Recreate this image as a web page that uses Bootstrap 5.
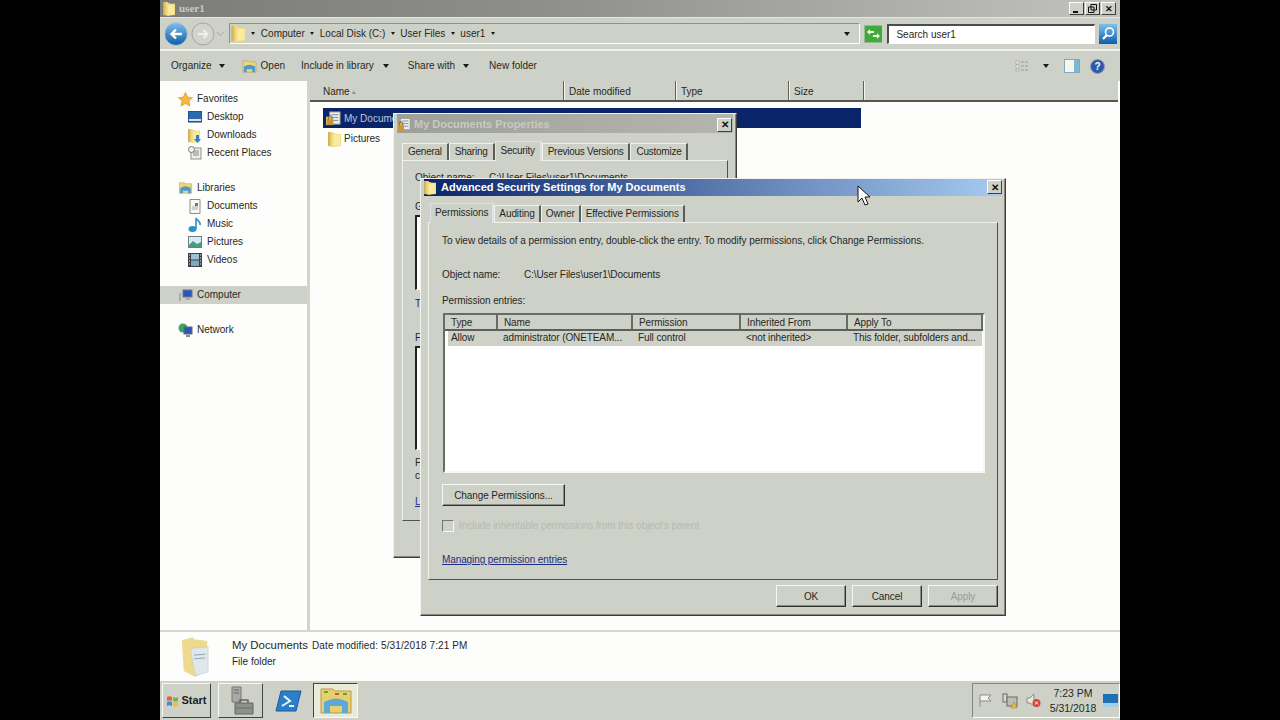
<!DOCTYPE html>
<html lang="en">
<head>
<meta charset="UTF-8">
<title>user1</title>
<link href="https://cdn.jsdelivr.net/npm/bootstrap@5.3.0/dist/css/bootstrap.min.css" rel="stylesheet">
<style>
  :root { --panel: #ced1c7; --dark: #4a4c48; }
  html, body { height: 100%; background: #000; overflow: hidden; }
  body { font-family: "Liberation Sans", Arial, sans-serif; font-size: 10px; color: #26281f; line-height: 1.2; }
  .screen { position: relative; width: 960px; height: 720px; margin: 0 auto; background: #fdfefb; overflow: hidden; }

  /* explorer chrome */
  .titlebar { height: 18px; padding-left: 3px; background: linear-gradient(90deg, #7c7d7a, #8e8f8c 40%, #c2c3be); color: #c9cac5; font-weight: 700; font-size: 11px; border-bottom: 1px solid #e6e7e2; }
  .title-name { font-family: "Liberation Serif", serif; }
  .win-btn { width: 15px; height: 13px; background: var(--panel); border: 1px solid; border-color: #fff #3f3f3f #3f3f3f #fff; font-size: 9px; font-weight: 700; line-height: 10px; text-align: center; color: #111; padding: 0; display: flex; align-items: center; justify-content: center; }
  .addressbar { height: 33px; padding: 0 3px 0 5px; background: var(--panel); border-bottom: 2px solid #f0f1ec; }
  .crumbs { width: 632px; height: 21px; margin-left: 2px; padding-right: 5px; border: 1px solid #8f918b; border-bottom-color: #fff; border-right-color: #fff; }
  .crumbs span { white-space: nowrap; }
  .caret-d { display: inline-block; width: 0; height: 0; border-left: 3.5px solid transparent; border-right: 3.5px solid transparent; border-top: 4px solid #1b1b1b; flex-shrink: 0; }
  .caret-s { border-left-width: 2.5px; border-right-width: 2.5px; border-top-width: 3px; margin: 0 5.5px; }
  .search { width: 208px; height: 20px; margin-left: 5px; padding: 0 0 0 7px; font-size: 10px; background: #fff; border: 1px solid #fff; border-top: 2px solid #4b4d48; border-left: 2px solid #4b4d48; color: #26281f; }
  .toolbar { height: 30px; padding: 0 15px 0 11px; background: var(--panel); }
  .main { height: 549px; }
  .sidenav { width: 150px; padding-top: 9px; border-right: 3px solid #d2d4cc; flex-shrink: 0; }
  .sidenav .list-group-item { height: 18px; padding: 0 0 0 18px; border: 0; background: transparent; color: #26281f; font-size: 10px; display: flex; align-items: center; gap: 4px; border-radius: 0; }
  .sidenav .list-group-item.sub { padding-left: 28px; gap: 5px; }
  .sidenav .list-group-item.active { background: var(--panel); }
  .sidenav .list-group-item.group-gap { margin-top: 17px; }
  .files { flex: 1 1 auto; min-width: 0; }
  .colhead { height: 21px; background: var(--panel); border-bottom: 2px solid #55574f; margin-right: 2px; }
  .colhead > div { height: 100%; padding-left: 5px; line-height: 22px; border-right: 1px solid #5f615a; box-shadow: 1px 0 #f3f4ee; }
  .sort-mark { color: #8f918a; font-size: 7px; vertical-align: 1px; }
  .filelist { padding: 6px 0 0 13px; }
  .filerow { height: 20px; width: 538px; padding-left: 3px; gap: 3px; }
  .filerow.sel { background: #0a246a; color: #bfc7d8; margin-bottom: 1px; padding-top: 1px; }
  .details { height: 51px; border-top: 2px solid #d6d8d0; padding-left: 20px; }
  .details .name { font-size: 11.4px; margin-right: 4px; }
  .details .modified { letter-spacing: .12px; }
  .details .info { margin-left: 22px; padding-bottom: 6px; }
  .taskbar { height: 39px; padding: 2px 0 2px 2px; background: var(--panel); }
  .task-btn { height: 35px; padding: 0; border: 1px solid; border-color: #f7f8f3 #43453f #43453f #f7f8f3; border-radius: 0; background: var(--panel); display: flex; align-items: center; justify-content: center; }
  .task-btn.down { border-color: #43453f #f7f8f3 #f7f8f3 #43453f; background: #e9ead7; }
  .tray { width: 148px; height: 35px; border: 1px solid; border-color: #84867f #fbfbf8 #fbfbf8 #84867f; padding-left: 5px; }
  .tray .clock { font-size: 10.5px; text-align: center; line-height: 15px; width: 52px; margin-left: 6px; }

  /* dialogs */
  .dialog { position: absolute; background: var(--panel); border: 1px solid; border-color: #f1f2ed #3d3f3a #3d3f3a #f1f2ed; box-shadow: inset -1px -1px #85877f; }
  .dlg-props { left: 233px; top: 113px; width: 344px; height: 445px; padding: 0 3px 3px; }
  .dlg-adv { left: 260px; top: 178px; width: 586px; height: 438px; padding: 0 7px 8px 3px; }
  .dlg-title { height: 17px; font-weight: 700; font-size: 11px; }
  .dlg-props .dlg-title { color: #c8cac3; background: linear-gradient(90deg, #9d9f99, #b4b6ae); height: 19px; gap: 3px; padding-top: 2px; }
  .dlg-adv .dlg-title { color: #fff; background: linear-gradient(90deg, #0a246a, #a6caf0); margin-right: -4px; gap: 5px; }
  .dialog .win-btn { width: 15px; height: 14px; font-size: 10px; line-height: 11px; }
  .nav-tabs { border: 0; padding-left: 1px; margin-bottom: 0; flex-wrap: nowrap; align-items: flex-end; }
  .nav-tabs .nav-link { height: 17px; padding: 0 5px; margin: 0; font-size: 10px; letter-spacing: -.25px; line-height: 16px; color: #26281f; background: var(--panel); border: 0; border-top: 1px solid #f1f2ed; border-left: 1px solid #f1f2ed; border-right: 2px solid #5b5d57; border-radius: 0; white-space: nowrap; }
  .nav-tabs .nav-link.active { height: 20px; line-height: 18px; color: #26281f; background: var(--panel); margin-bottom: -1px; position: relative; z-index: 1; border-bottom: 0; }
  .tabpanel { border: 1px solid; border-color: #f1f2ed #50524c #50524c #f1f2ed; }
  .dlg-props .nav-tabs { margin: 8px 0 0 4px; }
  .dlg-props .tabpanel { margin: 0 5px 0 5px; height: 361px; padding: 11px 0 0 12px; }
  .stub { height: 13px; white-space: nowrap; }
  .stub-box { width: 120px; background: #fff; border: 1px solid #fff; border-left: 2px solid #222; border-top: 2px solid #222; }
  .dlg-adv .nav-tabs { margin: 7px 0 0 5px; }
  .dlg-adv .nav-tabs .nav-link { padding: 0 4px; letter-spacing: -.1px; }
  .dlg-adv .tabpanel { margin-left: 4px; height: 358px; padding: 12px 13px 0 13px; letter-spacing: -.1px; }
  .perm-hint { letter-spacing: -.04px; }
  .perm-table { width: 542px; height: 160px; margin-left: 1px; background: #fff; border: 2px solid; border-color: #696b65 #f6f7f1 #f6f7f1 #696b65; }
  .perm-table table { width: 100%; table-layout: fixed; margin: 0; font-size: 10px; color: #26281f; --bs-table-bg: transparent; }
  .perm-table th, .perm-table td { padding: 0 0 0 6px; border: 0; font-weight: 400; white-space: nowrap; line-height: 13px; background: var(--panel); color: #26281f; }
  .perm-table th { height: 15px; border-right: 2px solid #696b65; border-bottom: 2px solid #5d5f59; }
  .perm-table td { height: 16px; }
  .perm-table td:first-child { box-shadow: inset 3px 0 #fff; }
  .btn-win { height: 22px; padding: 0; font-size: 10px; letter-spacing: -.1px; color: #26281f; background: var(--panel); border: 1px solid; border-color: #f6f7f2 #2f312c #2f312c #f6f7f2; border-radius: 0; box-shadow: inset -1px -1px #8a8c84; }
  .btn-win:disabled { color: #9a9c94; opacity: 1; background: var(--panel); border-color: #f6f7f2 #2f312c #2f312c #f6f7f2; }
  .btn-change { width: 123px; margin-top: 11px; }
  .form-check { margin: 14px 0 0; padding: 0; min-height: 0; gap: 5px; color: #a2a49c; }
  .form-check .form-check-input { float: none; margin: 0; width: 12px; height: 12px; border-radius: 0; background-color: var(--panel); border: 1px solid; border-color: #777971 #f6f7f2 #f6f7f2 #777971; opacity: 1; }
  .form-check .form-check-label { opacity: 1; color: #a2a49c; }
  .perm-link { margin-top: 22px; }
  a.plink { color: #1f2f80; }
  .dlg-foot { gap: 6px; margin-top: 5px; }
  .dlg-foot .btn-win { width: 70px; height: 22px; }
  .cursor { position: absolute; left: 697px; top: 185px; }
</style>
</head>
<body>
<svg width="0" height="0" class="position-absolute">
  <defs>
    <linearGradient id="fy" x1="0" x2="1"><stop offset="0" stop-color="#c9a94c"/><stop offset=".5" stop-color="#f4dc85"/><stop offset="1" stop-color="#ecd47a"/></linearGradient>
    <linearGradient id="bb" x1="0" y1="0" x2="0" y2="1"><stop offset="0" stop-color="#7ec0ee"/><stop offset="1" stop-color="#0d5da8"/></linearGradient>
    <symbol id="folder" viewBox="0 0 14 17"><path d="M0 1h5l1 1 3 1v13l-3 1-6-1z" fill="url(#fy)"/><path d="M5 3l9 0v13l-9 1z" fill="#f2dc82"/><path d="M6 4h7v11l-7 1z" fill="#f9ec9e"/></symbol>
    <symbol id="lockdoc" viewBox="0 0 16 16"><rect x="4" y="1" width="11" height="13" fill="#f1efe4" stroke="#9a9a8e"/><path d="M6 4h7M6 7h7M6 10h7" stroke="#6c86b2"/><path d="M0 6h6v9H0z" fill="#d9b658"/><rect x="1" y="9" width="7" height="6" fill="#c9972a"/><path d="M2.500 9V7a2 2 0 014 0v2" fill="none" stroke="#57533e"/></symbol>
    <symbol id="star" viewBox="0 0 16 16"><path d="M8 .5l2.300 5 5.200.6-3.900 3.500 1.100 5.400L8 12.300l-4.700 2.700 1.100-5.400L.5 6.100l5.200-.6z" fill="#f5b942" stroke="#d98a1f" stroke-width=".7"/></symbol>
    <symbol id="libs" viewBox="0 0 16 16"><path d="M1 2h6l1 1h7v11H1z" fill="#ecd67c" stroke="#b99b48" stroke-width=".6"/><path d="M2 14V8q6-4 12 0v6h-3v-3H5v3z" fill="#4f9ac9"/></symbol>
  </defs>
</svg>

<div class="screen">
  <!-- explorer window -->
  <div class="titlebar d-flex align-items-center">
    <svg width="12" height="15" class="me-1"><use href="#folder"/></svg>
    <span class="flex-grow-1 title-name">user1</span>
    <div class="d-flex me-1" style="gap:1px">
      <button class="win-btn"><svg width="9" height="9" viewBox="0 0 9 9"><path d="M1 7h5v2H1z" fill="#111"/></svg></button>
      <button class="win-btn"><svg width="9" height="9" viewBox="0 0 9 9"><path d="M3 .5h5.500v5.500H3zM.5 3H6v5.500H.5z" fill="#ced1c7" stroke="#111"/></svg></button>
      <button class="win-btn">✕</button>
    </div>
  </div>

  <div class="addressbar d-flex align-items-center">
    <svg width="62" height="26" viewBox="0 0 62 26">
      <circle cx="11" cy="13" r="11.500" fill="url(#bb)" stroke="#b6c9d4"/>
      <path d="M17 13H7M11 8.500L6.500 13l4.500 4.500" fill="none" stroke="#fff" stroke-width="2.400"/>
      <circle cx="38" cy="13" r="11" fill="#d2d4cc" stroke="#a5a79f"/>
      <path d="M33 13h9M38.500 9l4 4-4 4" fill="none" stroke="#eef0ea" stroke-width="2"/>
      <path d="M52 11l3.500 3.500L59 11" fill="none" stroke="#a5a79f"/>
    </svg>
    <div class="crumbs d-flex align-items-center">
      <svg width="15" height="17" style="margin-left:1px"><use href="#folder"/></svg>
      <span class="caret-d caret-s"></span><span>Computer</span>
      <span class="caret-d caret-s"></span><span>Local Disk (C:)</span>
      <span class="caret-d caret-s"></span><span>User Files</span>
      <span class="caret-d caret-s"></span><span>user1</span>
      <span class="caret-d caret-s"></span>
      <span class="caret-d ms-auto me-1"></span>
    </div>
    <svg width="19" height="18" viewBox="0 0 19 18" class="ms-1"><rect x=".5" y=".5" width="18" height="17" fill="#3faa3a" stroke="#9cb69a"/><path d="M3 7l3-3v2h4v2H6v2zM16 11l-3 3v-2H9v-2h4V8z" fill="#eef6e8"/></svg>
    <input class="search form-control rounded-0 shadow-none" value="Search user1">
    <svg width="18" height="20" viewBox="0 0 18 20" class="ms-1"><rect width="18" height="20" fill="url(#bb)"/><circle cx="10.500" cy="8" r="4" fill="none" stroke="#fff" stroke-width="1.600"/><path d="M8 11l-4 4" stroke="#fff" stroke-width="2.200"/></svg>
  </div>

  <div class="toolbar d-flex align-items-center">
    <span>Organize</span><span class="caret-d" style="margin-left:7px"></span>
    <svg width="15" height="15" style="margin-left:17px;margin-right:4px"><use href="#libs"/></svg><span>Open</span>
    <span style="margin-left:16px">Include in library</span><span class="caret-d" style="margin-left:9px"></span>
    <span style="margin-left:19px">Share with</span><span class="caret-d" style="margin-left:8px"></span>
    <span style="margin-left:20px">New folder</span>
    <svg width="15" height="12" viewBox="0 0 15 12" class="ms-auto"><path d="M1 1h3v3H1zM1 5h3v3H1zM1 9h3v2H1z" fill="#eee" stroke="#999" stroke-width=".6"/><path d="M6 2h8M6 6h8M6 10h8" stroke="#9a9c94" stroke-dasharray="3 1"/></svg>
    <span class="caret-d" style="margin-left:13px"></span>
    <svg width="16" height="14" viewBox="0 0 16 14" style="margin-left:15px"><rect x=".5" y=".5" width="15" height="13" fill="#f6f7ef" stroke="#87a6b8"/><rect x="10" y="1" width="5" height="12" fill="#7fb6d2"/></svg>
    <svg width="15" height="15" viewBox="0 0 15 15" style="margin-left:10px"><circle cx="7.500" cy="7.500" r="7" fill="#2c5aa8" stroke="#8d9fc0"/><text x="7.500" y="11" font-size="10" font-weight="700" text-anchor="middle" fill="#fff" font-family="Liberation Sans">?</text></svg>
  </div>

  <div class="main d-flex">
    <div class="sidenav">
      <div class="list-group">
        <div class="list-group-item"><svg width="15" height="15"><use href="#star"/></svg>Favorites</div>
        <div class="list-group-item sub"><svg width="14" height="12" viewBox="0 0 14 12"><rect width="14" height="11" fill="#2a6bb0" stroke="#1e3f6e"/><rect x="1" y="8" width="12" height="2" fill="#d8e4f0"/></svg>Desktop</div>
        <div class="list-group-item sub"><svg width="14" height="15" viewBox="0 0 14 15"><use href="#folder" width="12" height="15"/><path d="M8 7h3v4h2l-3.500 4L6 11h2z" fill="#2f7fc9"/></svg>Downloads</div>
        <div class="list-group-item sub"><svg width="14" height="14" viewBox="0 0 14 14"><rect x="3" y="2" width="10" height="11" fill="#eef0e8" stroke="#8f9188"/><path d="M5 5h6M5 7h6M5 9h6" stroke="#7a8aa0"/><circle cx="3.500" cy="3.500" r="3" fill="#f3f3ee" stroke="#777"/></svg>Recent Places</div>
        <div class="list-group-item group-gap"><svg width="15" height="14"><use href="#libs"/></svg>Libraries</div>
        <div class="list-group-item sub"><svg width="14" height="15" viewBox="0 0 14 15"><path d="M2 .5h10v14H2z" fill="#f7f8f4" stroke="#8b8d86"/><path d="M4 8h6M4 10h6" stroke="#a6a89f"/><rect x="7" y="4" width="3" height="3" fill="#4b7cbc"/></svg>Documents</div>
        <div class="list-group-item sub"><svg width="14" height="15" viewBox="0 0 14 15"><ellipse cx="4.500" cy="12" rx="4" ry="3" fill="#2f8fc7"/><path d="M8 12V1c1 3 5 3 4 7" fill="none" stroke="#2f8fc7" stroke-width="1.600"/></svg>Music</div>
        <div class="list-group-item sub"><svg width="14" height="12" viewBox="0 0 14 12"><rect x=".5" y=".5" width="13" height="11" fill="#d8ebf0" stroke="#6f7f88"/><path d="M1 9l4-4 4 3 4-2v5H1z" fill="#4d9a80"/></svg>Pictures</div>
        <div class="list-group-item sub"><svg width="14" height="14" viewBox="0 0 14 14"><rect width="14" height="14" fill="#3c4044"/><rect x="3" y="1" width="8" height="5.500" fill="#9ec2d4"/><rect x="3" y="7.500" width="8" height="5.500" fill="#7fa7ba"/><path d="M1 2h1M1 5h1M1 8h1M1 11h1M12 2h1M12 5h1M12 8h1M12 11h1" stroke="#eee"/></svg>Videos</div>
        <div class="list-group-item active group-gap"><svg width="15" height="13" viewBox="0 0 15 13"><rect x="5" y="1" width="9" height="7" fill="#2a55c0" stroke="#777"/><path d="M8 9h4v2H7z" fill="#aaa"/><path d="M1 4h2v8H1z" fill="#aaa"/></svg>Computer</div>
        <div class="list-group-item group-gap"><svg width="15" height="14" viewBox="0 0 15 14"><circle cx="5" cy="5" r="4.500" fill="#3ca85c"/><rect x="6" y="4" width="8" height="7" fill="#2a55c0" stroke="#666"/><path d="M8 13h4" stroke="#666" stroke-width="1.500"/></svg>Network</div>
      </div>
    </div>
    <div class="files">
      <div class="colhead d-flex">
        <div style="width:254px;padding-left:13px">Name <span class="sort-mark">▴</span></div>
        <div style="width:112px">Date modified</div>
        <div style="width:113px">Type</div>
        <div style="width:75px">Size</div>
      </div>
      <div class="filelist">
        <div class="filerow sel d-flex align-items-center"><svg width="15" height="15"><use href="#lockdoc"/></svg>My Documents</div>
        <div class="filerow d-flex align-items-center" style="padding-left:5px"><svg width="13" height="16"><use href="#folder"/></svg>Pictures</div>
      </div>
    </div>
  </div>

  <div class="details d-flex align-items-center">
    <svg width="30" height="40" viewBox="0 0 32 42"><path d="M2 3l12-3 1 2 14 2v32L16 42 4 36z" fill="#eed98c"/><path d="M11 12l19-2v27L16 41z" fill="#dfe7ea" stroke="#b9c1c4" stroke-width=".5"/><path d="M15 19l12-1M15 23l12-1" stroke="#8aa2b6"/></svg>
    <div class="info">
      <div class="d-flex align-items-baseline"><span class="name">My Documents</span><span class="modified">Date modified: 5/31/2018 7:21 PM</span></div>
      <div style="margin-top:3px">File folder</div>
    </div>
  </div>

  <div class="taskbar d-flex">
    <button class="task-btn" style="width:49px;font-weight:700;font-size:11px;color:#222;gap:2px">
      <svg width="13" height="12" viewBox="0 0 13 12"><path d="M1 2q2.500-1.500 5 0v4q-2.500-1.500-5 0z" fill="#e4662b"/><path d="M7 2q2.500 1.500 5 0v4q-2.500 1.500-5 0z" fill="#7bb83a"/><path d="M1 7q2.500-1.500 5 0v4q-2.500-1.500-5 0z" fill="#3d8ed8"/><path d="M7 7q2.500 1.500 5 0v4q-2.500 1.500-5 0z" fill="#efc130"/></svg>Start
    </button>
    <button class="task-btn" style="width:45px;margin-left:7px">
      <svg width="28" height="30" viewBox="0 0 28 30"><path d="M5 1h9v15H5z" fill="#a9aaa5" stroke="#777"/><path d="M7 4h5M7 7h5" stroke="#666"/><path d="M8 17h18v11H8z" fill="#8e908a" stroke="#666"/><path d="M13 17v-3h8v3" fill="none" stroke="#666" stroke-width="1.500"/><path d="M8 22h18" stroke="#6a6c66"/></svg>
    </button>
    <div class="d-flex align-items-center justify-content-center" style="width:50px">
      <svg width="27" height="22" viewBox="0 0 27 22"><path d="M6 1h20l-5 20H1z" fill="#2a7fc9" stroke="#1a5a99"/><path d="M9 6l6 5-8 5M14 16h5" fill="none" stroke="#eef6ff" stroke-width="2"/></svg>
    </div>
    <button class="task-btn down" style="width:45px">
      <svg width="34" height="29" viewBox="0 0 34 29"><path d="M2 3h12l2 2h16v22H2z" fill="#e8cf6e" stroke="#b99b48"/><rect x="5" y="5" width="4" height="2" fill="#5aa646"/><rect x="16" y="7" width="4" height="2" fill="#c65a3a"/><rect x="24" y="7" width="4" height="2" fill="#5aa646"/><path d="M5 27V16q12-7 24 0v11h-6v-7H11v7z" fill="#5aa9d8"/></svg>
    </button>
    <div class="tray d-flex align-items-center ms-auto">
      <svg width="16" height="14" viewBox="0 0 16 14" class="me-1"><path d="M2 1v12M2 1h11l-3 3 3 3H2" fill="#f3f4ef" stroke="#8b8d86"/></svg>
      <svg width="16" height="16" viewBox="0 0 16 16" class="ms-1 me-1"><rect x="1" y="1" width="4" height="8" fill="#d8dad2" stroke="#686a64"/><rect x="5" y="4" width="10" height="9" fill="#bcbeb6" stroke="#686a64"/><path d="M9 15l3-6 3 6z" fill="#efc130" stroke="#9a7f20" stroke-width=".5"/></svg>
      <svg width="15" height="15" viewBox="0 0 15 15" class="ms-1"><path d="M1 5h3l4-4v12L4 10H1z" fill="#e6e7e1" stroke="#8b8d86"/><circle cx="10.500" cy="10" r="4" fill="#d8443a"/><path d="M9 8.500l3 3M12 8.500l-3 3" stroke="#fff"/></svg>
      <div class="clock"><div>7:23 PM</div><div>5/31/2018</div></div>
      <svg width="15" height="13" viewBox="0 0 15 13" class="ms-1"><rect width="15" height="13" fill="#1f6fb5"/><rect y="9" width="15" height="4" fill="#9fd0ee"/></svg>
    </div>
  </div>

  <!-- properties dialog, behind -->
  <div class="dialog dlg-props">
    <div class="dlg-title d-flex align-items-center">
      <svg width="14" height="15"><use href="#lockdoc"/></svg>
      <span class="flex-grow-1">My Documents Properties</span>
      <button class="win-btn" style="margin-right:1px">✕</button>
    </div>
    <ul class="nav nav-tabs">
      <li class="nav-item"><a class="nav-link" href="#">General</a></li>
      <li class="nav-item"><a class="nav-link" href="#">Sharing</a></li>
      <li class="nav-item"><a class="nav-link active" href="#">Security</a></li>
      <li class="nav-item"><a class="nav-link" href="#">Previous Versions</a></li>
      <li class="nav-item"><a class="nav-link" href="#">Customize</a></li>
    </ul>
    <div class="tabpanel">
      <div class="stub d-flex"><span style="width:74px">Object name:</span><span>C:\User Files\user1\Documents</span></div>
      <div class="stub" style="margin-top:16px">G</div>
      <div class="stub-box" style="height:75px;margin-top:1px"></div>
      <div class="stub" style="margin-top:8px">T</div>
      <div class="stub" style="margin-top:21px">F</div>
      <div class="stub-box" style="height:104px;margin-top:1px"></div>
      <div class="stub" style="margin-top:7px">F</div>
      <div class="stub">c</div>
      <div class="stub" style="margin-top:13px"><a class="plink" href="#">L</a></div>
    </div>
  </div>

  <!-- advanced security dialog -->
  <div class="dialog dlg-adv">
    <div class="dlg-title d-flex align-items-center">
      <svg width="12" height="15"><use href="#folder"/></svg>
      <span class="flex-grow-1">Advanced Security Settings for My Documents</span>
    </div>
    <button class="win-btn position-absolute" style="right:3px;top:1px">✕</button>
    <ul class="nav nav-tabs">
      <li class="nav-item"><a class="nav-link active" href="#">Permissions</a></li>
      <li class="nav-item"><a class="nav-link" href="#">Auditing</a></li>
      <li class="nav-item"><a class="nav-link" href="#">Owner</a></li>
      <li class="nav-item"><a class="nav-link" href="#">Effective Permissions</a></li>
    </ul>
    <div class="tabpanel">
      <div class="perm-hint">To view details of a permission entry, double-click the entry. To modify permissions, click Change Permissions.</div>
      <div class="d-flex" style="margin-top:22px"><span style="width:82px">Object name:</span><span>C:\User Files\user1\Documents</span></div>
      <div style="margin-top:14px;margin-bottom:6px">Permission entries:</div>
      <div class="perm-table">
        <table class="table">
          <colgroup><col style="width:52px"><col style="width:135px"><col style="width:108px"><col style="width:107px"><col></colgroup>
          <thead><tr><th>Type</th><th>Name</th><th>Permission</th><th>Inherited From</th><th>Apply To</th></tr></thead>
          <tbody><tr><td>Allow</td><td>administrator (ONETEAM...</td><td>Full control</td><td>&lt;not inherited&gt;</td><td>This folder, subfolders and...</td></tr></tbody>
        </table>
      </div>
      <button class="btn btn-win btn-change">Change Permissions...</button>
      <div class="form-check d-flex align-items-center">
        <input class="form-check-input" type="checkbox" id="inh" disabled>
        <label class="form-check-label" for="inh">Include inheritable permissions from this object's parent</label>
      </div>
      <div class="perm-link"><a class="plink" href="#">Managing permission entries</a></div>
    </div>
    <div class="dlg-foot d-flex justify-content-end">
      <button class="btn btn-win">OK</button>
      <button class="btn btn-win">Cancel</button>
      <button class="btn btn-win" disabled>Apply</button>
    </div>
  </div>

  <svg class="cursor" width="14" height="22" viewBox="0 0 14 22"><path d="M1 1v16l4-4 3 7 3-1-3-7h5z" fill="#fff" stroke="#111"/></svg>
</div>
<script src="https://cdn.jsdelivr.net/npm/bootstrap@5.3.0/dist/js/bootstrap.bundle.min.js"></script>
</body>
</html>
